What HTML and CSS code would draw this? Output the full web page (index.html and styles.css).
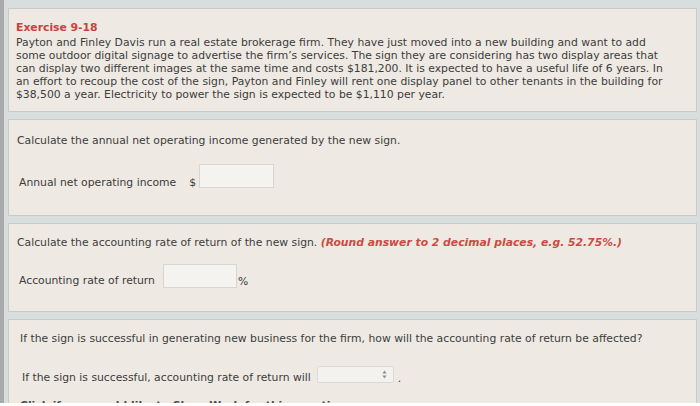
FILE: index.html
```html
<!DOCTYPE html>
<html lang="en">
<head>
<meta charset="utf-8">
<title>Exercise 9-18</title>
<link rel="stylesheet" href="styles.css">
</head>
<body>
<div class="page">
  <section class="panel intro">
    <h1 class="title">Exercise 9-18</h1>
    <p class="text">Payton and Finley Davis run a real estate brokerage firm. They have just moved into a new building and want to add some outdoor digital signage to advertise the firm’s services. The sign they are considering has two display areas that can display two different images at the same time and costs $181,200. It is expected to have a useful life of 6 years. In an effort to recoup the cost of the sign, Payton and Finley will rent one display panel to other tenants in the building for $38,500 a year. Electricity to power the sign is expected to be $1,110 per year.</p>
  </section>

  <section class="panel q q1">
    <p class="question">Calculate the annual net operating income generated by the new sign.</p>
    <div class="answer">
      <span class="label">Annual net operating income</span>
      <span class="unit unit-dollar">$</span>
      <input class="field field-income" type="text" aria-label="Annual net operating income">
    </div>
  </section>

  <section class="panel q q2">
    <p class="question">Calculate the accounting rate of return of the new sign. <em class="hint">(Round answer to 2 decimal places, e.g. 52.75%.)</em></p>
    <div class="answer">
      <span class="label">Accounting rate of return</span>
      <input class="field field-rate" type="text" aria-label="Accounting rate of return">
      <span class="unit unit-pct">%</span>
    </div>
  </section>

  <section class="panel q q3">
    <p class="question">If the sign is successful in generating new business for the firm, how will the accounting rate of return be affected?</p>
    <div class="answer answer-select">
      <span class="label">If the sign is successful, accounting rate of return will</span>
      <span class="select" role="combobox" aria-label="choose">
        <svg class="arrows" width="5" height="9" viewBox="0 0 5 9"><path d="M2.5 0.5 L4.6 3.4 L0.4 3.4 Z M2.5 8.5 L4.6 5.6 L0.4 5.6 Z" fill="#8d8f90"/></svg>
      </span>
      <span class="period">.</span>
    </div>
    <p class="showwork">Click if you would like to Show Work for this question:</p>
  </section>
</div>
</body>
</html>
```

FILE: styles.css
```css
html, body {
  margin: 0;
  padding: 0;
}

body {
  width: 700px;
  height: 406px;
  background: #ffffff;
  overflow: hidden;
  font-family: "DejaVu Sans", Verdana, sans-serif;
  font-size: 10.8px;
  line-height: 13px;
  color: #3c3c3c;
}

.page {
  height: 403px;
  overflow: hidden;
  box-sizing: border-box;
  padding: 8px 3px 0 4px;
  border-left: 4px solid #a9abaa;
  background: #d8dddd;
  display: flex;
  flex-direction: column;
  gap: 7px;
}

.panel {
  background: #eeeae3;
  border: 1px solid #c6cac9;
  box-sizing: border-box;
  flex: none;
}

.intro {
  height: 104px;
  padding: 12px 21px 0 7px;
}

.title {
  margin: 0 0 2px;
  font-size: 10.8px;
  line-height: 13px;
  font-weight: bold;
  color: #c8423f;
}

.text {
  margin: 0;
}

.q {
  padding: 14px 10px 0 8px;
}

.q1 { height: 97px; }
.q2 { height: 89px; padding-top: 12px; }
.q3 { flex: 1; padding-top: 12px; padding-left: 11px; }

.question {
  margin: 0;
}

.hint {
  font-weight: bold;
  font-style: italic;
  color: #cc4a3f;
}

.answer {
  display: flex;
  align-items: flex-end;
  margin-top: 17px;
  padding-left: 2px;
}

.q2 .answer { margin-top: 15px; }

.label {
  margin-bottom: -1px;
}

.q2 .label {
  margin-bottom: 1px;
}

.unit {
  margin-bottom: -1px;
}

.unit-dollar {
  margin-left: 13px;
  margin-right: 3px;
}

.unit-pct {
  margin-left: 1px;
  margin-bottom: 0;
}

.field {
  box-sizing: border-box;
  width: 75px;
  height: 24px;
  margin: 0;
  padding: 0 4px;
  border: 1px solid #d6d6d2;
  background: #f4f3ef;
  font: inherit;
  outline: none;
}

.field-rate {
  width: 74px;
  margin-left: 8px;
}

.answer-select {
  margin-top: 21px;
}

.select {
  box-sizing: border-box;
  width: 77px;
  height: 17px;
  margin-left: 6px;
  border: 1px solid #dadbd8;
  border-radius: 2px;
  background: #f3f2ee;
  display: flex;
  align-items: center;
  justify-content: flex-end;
  padding-right: 6px;
}

.arrows {
  display: block;
}

.period {
  margin-left: 4px;
  margin-bottom: -2px;
}

.showwork {
  margin: 16px 0 0;
  font-weight: bold;
  color: #4a4a4a;
}
```
